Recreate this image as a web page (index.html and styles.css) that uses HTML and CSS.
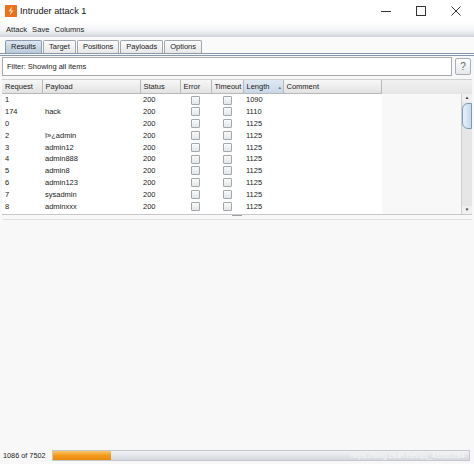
FILE: index.html
```html
<!DOCTYPE html>
<html>
<head>
<meta charset="utf-8">
<link rel="stylesheet" href="styles.css">
</head>
<body>
<div class="window">
  <div class="titlebar">
    <svg class="logo" width="12" height="12" viewBox="0 0 14 14">
      <rect x="0" y="0" width="14" height="14" rx="1" fill="#e8731c"/>
      <path d="M8.5 1.5 L4 7.2 L7 7.2 L5.2 12.5 L10 6.3 L7 6.3 Z" fill="#fbe3c8"/>
    </svg>
    <span class="title">Intruder attack 1</span>
    <div class="controls">
      <svg width="12" height="12" viewBox="0 0 12 12"><path d="M1 6.5 H11" stroke="#333" stroke-width="1"/></svg>
      <svg width="12" height="12" viewBox="0 0 12 12"><rect x="1.5" y="1.5" width="9" height="9" fill="none" stroke="#333" stroke-width="1"/></svg>
      <svg width="12" height="12" viewBox="0 0 12 12"><path d="M1.5 1.5 L10.5 10.5 M10.5 1.5 L1.5 10.5" stroke="#333" stroke-width="1"/></svg>
    </div>
  </div>
  <div class="menubar">
    <span>Attack</span><span>Save</span><span>Columns</span>
  </div>
  <div class="tabs">
    <span class="tab active">Results</span>
    <span class="tab">Target</span>
    <span class="tab">Positions</span>
    <span class="tab">Payloads</span>
    <span class="tab">Options</span>
  </div>
  <div class="content">
    <div class="filterrow">
      <div class="filter">Filter: Showing all items</div>
      <div class="help">?</div>
    </div>
    <div class="tablebox">
      <div class="tablewrap">
        <table class="results">
          <colgroup>
            <col style="width:40px"><col style="width:98px"><col style="width:40px"><col style="width:31px"><col style="width:32px"><col style="width:40px"><col style="width:98px">
          </colgroup>
          <thead>
            <tr><th>Request</th><th>Payload</th><th>Status</th><th>Error</th><th>Timeout</th><th class="sorted">Length <span class="arrow">▲</span></th><th>Comment</th></tr>
          </thead>
          <tbody>
            <tr><td>1</td><td></td><td>200</td><td class="cb"><i></i></td><td class="cb"><i></i></td><td>1090</td><td></td></tr>
            <tr><td>174</td><td>hack</td><td>200</td><td class="cb"><i></i></td><td class="cb"><i></i></td><td>1110</td><td></td></tr>
            <tr><td>0</td><td></td><td>200</td><td class="cb"><i></i></td><td class="cb"><i></i></td><td>1125</td><td></td></tr>
            <tr><td>2</td><td>ï»¿admin</td><td>200</td><td class="cb"><i></i></td><td class="cb"><i></i></td><td>1125</td><td></td></tr>
            <tr><td>3</td><td>admin12</td><td>200</td><td class="cb"><i></i></td><td class="cb"><i></i></td><td>1125</td><td></td></tr>
            <tr><td>4</td><td>admin888</td><td>200</td><td class="cb"><i></i></td><td class="cb"><i></i></td><td>1125</td><td></td></tr>
            <tr><td>5</td><td>admin8</td><td>200</td><td class="cb"><i></i></td><td class="cb"><i></i></td><td>1125</td><td></td></tr>
            <tr><td>6</td><td>admin123</td><td>200</td><td class="cb"><i></i></td><td class="cb"><i></i></td><td>1125</td><td></td></tr>
            <tr><td>7</td><td>sysadmin</td><td>200</td><td class="cb"><i></i></td><td class="cb"><i></i></td><td>1125</td><td></td></tr>
            <tr><td>8</td><td>adminxxx</td><td>200</td><td class="cb"><i></i></td><td class="cb"><i></i></td><td>1125</td><td></td></tr>
          </tbody>
        </table>
        <div class="filler">
          <div class="fillerhead"></div>
        </div>
      </div>
      <div class="scrollbar">
        <div class="sbhead"></div>
        <div class="sbtrack">
          <div class="sbbtn">▲</div>
          <div class="thumb"></div>
          <div class="sbspace"></div>
          <div class="sbbtn">▼</div>
        </div>
      </div>
    </div>
    <div class="splitter"><span class="grip"></span></div>
    <div class="lower"></div>
  </div>
  <div class="statusbar">
    <span class="count">1086 of 7502</span>
    <div class="progress">
      <div class="fill" style="width:14%"></div>
      <span class="wm">https://blog.csdn.net/qq_43560264</span>
    </div>
  </div>
</div>
</body>
</html>
```

FILE: styles.css
```css
html, body {
  margin: 0;
  padding: 0;
}
body {
  width: 474px;
  height: 464px;
  overflow: hidden;
  font-family: "Liberation Sans", Arial, sans-serif;
  font-size: 7.5px;
  color: #222;
  background: #f8f8f8;
}
.window {
  display: flex;
  flex-direction: column;
  height: 464px;
}
.titlebar {
  height: 22px;
  background: #fff;
  display: flex;
  align-items: center;
  padding-left: 5px;
  flex-shrink: 0;
}
.logo {
  margin-right: 3px;
}
.title {
  font-size: 9.2px;
  color: #111;
}
.controls {
  margin-left: auto;
  display: flex;
  gap: 23px;
  margin-right: 12px;
}
.menubar {
  height: 15px;
  display: flex;
  align-items: center;
  gap: 5px;
  padding-left: 6px;
  background: linear-gradient(#ffffff 0%, #f3f4f6 55%, #dcdfe4 85%, #cfd3d9 100%);
  flex-shrink: 0;
  font-size: 7.6px;
}
.tabs {
  height: 14px;
  padding-top: 2px;
  padding-left: 5px;
  display: flex;
  align-items: flex-end;
  background: #fafafa;
  border-bottom: 3px double #8796a8;
  flex-shrink: 0;
}
.tab {
  height: 12px;
  line-height: 12px;
  padding: 0 5px;
  border: 1px solid #a0a6ae;
  border-bottom: none;
  border-radius: 2px 2px 0 0;
  margin-right: 1px;
  background: linear-gradient(#fbfbfb, #e8e8e8);
}
.tab.active {
  background: linear-gradient(#dbe6f0, #b9cad9);
  border-color: #8a9bb0;
}
.content {
  flex: 1;
  display: flex;
  flex-direction: column;
  padding: 0 2px;
  min-height: 0;
}
.filterrow {
  display: flex;
  align-items: center;
  margin-top: 1px;
  gap: 3px;
}
.filter {
  flex: 1;
  height: 17px;
  line-height: 17px;
  background: #fff;
  border: 1px solid #a9a9a9;
  padding-left: 4px;
}
.help {
  width: 14px;
  height: 15px;
  line-height: 15px;
  text-align: center;
  border: 1px solid #a8aeb6;
  border-radius: 2px;
  background: linear-gradient(#fdfdfd, #e6e8eb);
  color: #666;
  font-size: 10px;
  margin-right: 1px;
}
.tablebox {
  margin-top: 3px;
  height: 134px;
  display: flex;
  border-top: 1px solid #d0d0d0;
  border-bottom: 1px solid #c8c8c8;
  background: #fff;
}
.tablewrap {
  flex: 1;
  display: flex;
}
.results {
  table-layout: fixed;
  width: 379px;
  border-collapse: collapse;
  background: #fff;
  align-self: flex-start;
}
.results th {
  height: 13px;
  padding: 0 3px;
  font-weight: normal;
  text-align: left;
  background: linear-gradient(#f7f7f7, #e2e2e2);
  border-right: 1px solid #b8b8b8;
  border-bottom: 1px solid #b8b8b8;
  white-space: nowrap;
  overflow: hidden;
}
.results th.sorted {
  background: linear-gradient(#dfe9f3, #c8d8e8);
}
.arrow {
  font-size: 4.5px;
  color: #6b7c8f;
  margin-left: 6px;
  vertical-align: middle;
}
.results td {
  height: 11.8px;
  padding: 0 3px;
  white-space: nowrap;
  overflow: hidden;
}
.results td.cb {
  text-align: center;
  padding: 0;
}
.results td.cb i {
  display: inline-block;
  width: 7px;
  height: 7px;
  border: 1px solid #a3a8ae;
  border-radius: 1px;
  background: linear-gradient(#fafafa, #e3e5e8);
  vertical-align: middle;
}
.filler {
  flex: 1;
  background: #f8f8f8;
}
.fillerhead {
  height: 14px;
  background: linear-gradient(#f1f1f1, #e6e6e6);
}
.scrollbar {
  width: 11px;
  display: flex;
  flex-direction: column;
  background: #f2f2f2;
}
.sbhead {
  height: 14px;
  background: linear-gradient(#f1f1f1, #e4e4e4);
}
.sbtrack {
  flex: 1;
  display: flex;
  flex-direction: column;
  background: #e6e6e6;
  border-left: 1px solid #cfcfcf;
}
.sbbtn {
  height: 8px;
  font-size: 4.5px;
  line-height: 8px;
  text-align: center;
  color: #333;
  background: #f0f0f0;
}
.thumb {
  height: 24px;
  margin: 1px 0;
  border: 1px solid #7a9ab8;
  border-radius: 6px 0 0 6px;
  background: linear-gradient(90deg, #eaf1f8, #c7d8ea);
}
.sbspace {
  flex: 1;
}
.splitter {
  height: 4px;
  display: flex;
  justify-content: center;
  align-items: center;
  border-bottom: 1px solid #e0e0e0;
}
.grip {
  width: 10px;
  height: 1px;
  background: #a0a0a0;
  margin-top: -3px;
}
.lower {
  flex: 1;
  background: #f8f8f8;
}
.statusbar {
  height: 17px;
  display: flex;
  align-items: center;
  padding-left: 3px;
  padding-right: 4px;
  gap: 6px;
  flex-shrink: 0;
  background: #f8f8f8;
}
.count {
  font-size: 7.3px;
}
.progress {
  position: relative;
  flex: 1;
  height: 9px;
  border: 1px solid #c4c7cc;
  background: linear-gradient(#f2f3f5, #d5d8dd);
  overflow: hidden;
}
.fill {
  height: 100%;
  background: linear-gradient(#fbc56a, #f39a1c 50%, #e9890c);
}
.wm {
  position: absolute;
  right: 4px;
  top: 0;
  line-height: 9px;
  font-size: 7.5px;
  color: rgba(255, 255, 255, 0.75);
}
```
